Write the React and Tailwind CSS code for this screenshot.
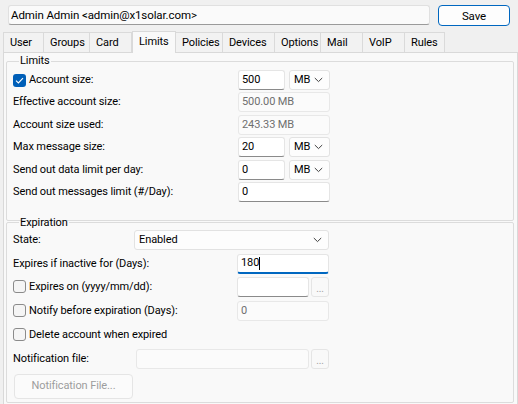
import React from 'react';

const tabs = [
    { name: 'User', w: 41 },
    { name: 'Groups', w: 46 },
    { name: 'Card', w: 42 },
    { name: 'Limits', w: 44, active: true },
    { name: 'Policies', w: 47 },
    { name: 'Devices', w: 52 },
    { name: 'Options', w: 46 },
    { name: 'Mail', w: 42 },
    { name: 'VoIP', w: 42 },
    { name: 'Rules', w: 40 },
];

function Chevron() {
    return (
        <svg width="9" height="6" viewBox="0 0 9 6" className="shrink-0">
            <path d="M0.8 1 L4.5 4.6 L8.2 1" fill="none" stroke="#404040" strokeWidth="1" />
        </svg>
    );
}

function Check({ checked }) {
    if (checked) {
        return (
            <span className="w-[13px] h-[13px] rounded-[3px] bg-[#005fb8] flex items-center justify-center shrink-0">
                <svg width="9" height="7" viewBox="0 0 9 7">
                    <path d="M1 3.6 L3.4 5.9 L8 1.2" fill="none" stroke="#fff" strokeWidth="1.1" />
                </svg>
            </span>
        );
    }
    return <span className="w-[13px] h-[13px] rounded-[3px] border border-[#8b8b8b] bg-[#f5f5f5] shrink-0" />;
}

function Input({ w, value, disabled, focused }) {
    let cls = 'h-[20px] rounded-[3px] border px-[3px] flex items-center shrink-0 ';
    if (disabled) cls += 'bg-[#fbfbfb] border-[#e8e8e8] text-[#6f6f6f]';
    else if (focused) cls += 'bg-white border-[#e5e5e5] border-b-2 border-b-[#0067c0] text-black';
    else cls += 'bg-white border-[#e5e5e5] border-b-[#8a8a8a] text-black';
    return (
        <div className={cls} style={{ width: w }}>
            <span>{value}</span>
            {focused && <span className="w-px h-[13px] bg-black" />}
        </div>
    );
}

function Select({ w, value }) {
    return (
        <div
            className="h-[20px] rounded-[3px] border border-[#e2e2e2] bg-[#fdfdfd] pl-[4px] pr-[6px] flex items-center justify-between shrink-0"
            style={{ width: w }}
        >
            <span>{value}</span>
            <Chevron />
        </div>
    );
}

function Dots() {
    return (
        <div className="ml-[2px] w-[18px] h-[20px] rounded-[3px] border border-[#e5e5e5] bg-[#f9f9f9] flex items-end justify-center pb-[2px] text-[#a0a0a0] text-[10px] leading-none">
            ...
        </div>
    );
}

function Row({ children, className = '' }) {
    return <div className={'h-[20px] flex items-center ' + className}>{children}</div>;
}

function Label({ w, children }) {
    return <div className="shrink-0" style={{ width: w }}>{children}</div>;
}

function CheckLabel({ w, checked, children }) {
    return (
        <div className="shrink-0 flex items-center gap-[3px]" style={{ width: w }}>
            <Check checked={checked} />
            <span>{children}</span>
        </div>
    );
}

export default function App() {
    return (
        <div className="w-[518px] h-[404px] bg-[#f0f0f0] overflow-hidden text-[11px] tracking-[-0.1px] text-black font-['Segoe_UI','Roboto',sans-serif] leading-[14px]">
            <div className="flex pt-[5px] pl-[8px]">
                <div className="w-[422px] h-[20px] bg-[#fafafa] border border-[#e0e0e0] border-b-[#9a9a9a] rounded-[3px] px-[2px] flex items-center text-[11.5px]">
                    Admin Admin &lt;admin@x1solar.com&gt;
                </div>
                <button className="ml-[8px] w-[72px] h-[21px] bg-[#fdfdfd] border border-[#0067c0] rounded-[4px] flex items-center justify-center text-[11.5px]">
                    Save
                </button>
            </div>

            <div className="flex items-end pl-[3px] mt-[5px] h-[21px] text-[11px]">
                {tabs.map(t => (
                    <div
                        key={t.name}
                        className={
                            t.active
                                ? 'h-[22px] -mb-px relative z-10 bg-[#f9f9f9] border border-b-0 border-[#d9d9d9] pl-[6px] pt-[3px] shrink-0'
                                : 'h-[20px] bg-[#f2f2f2] border border-b-0 border-l-0 first:border-l border-[#dadada] pl-[6px] pt-[3px] shrink-0'
                        }
                        style={{ width: t.w }}
                    >
                        {t.name}
                    </div>
                ))}
            </div>

            <div className="ml-[3px] w-[515px] h-[360px] bg-[#f9f9f9] border border-[#d9d9d9] px-[2px] pt-[1px]">
                <fieldset className="border border-[#dcdcdc] w-[508px] pl-[6px] pb-[18px] rounded-[2px]">
                    <legend className="ml-[6px] px-px">Limits</legend>
                    <div className="flex flex-col gap-[2.4px] pt-[2px]">
                        <Row>
                            <CheckLabel w={225} checked>Account size:</CheckLabel>
                            <Input w={47} value="500" />
                            <div className="ml-[4px]"><Select w={41} value="MB" /></div>
                        </Row>
                        <Row>
                            <Label w={225}>Effective account size:</Label>
                            <Input w={92} value="500.00 MB" disabled />
                        </Row>
                        <Row>
                            <Label w={225}>Account size used:</Label>
                            <Input w={92} value="243.33 MB" disabled />
                        </Row>
                        <Row>
                            <Label w={225}>Max message size:</Label>
                            <Input w={47} value="20" />
                            <div className="ml-[4px]"><Select w={41} value="MB" /></div>
                        </Row>
                        <Row>
                            <Label w={225}>Send out data limit per day:</Label>
                            <Input w={47} value="0" />
                            <div className="ml-[4px]"><Select w={41} value="MB" /></div>
                        </Row>
                        <Row>
                            <Label w={225}>Send out messages limit (#/Day):</Label>
                            <Input w={92} value="0" />
                        </Row>
                    </div>
                </fieldset>

                <fieldset className="-mt-[5px] border border-[#dcdcdc] w-[508px] pl-[6px] pb-[3px] rounded-[2px]">
                    <legend className="ml-[6px] px-px">Expiration</legend>
                    <div className="flex flex-col gap-[3px]">
                        <Row className="mb-[1px]">
                            <Label w={121}>State:</Label>
                            <Select w={195} value="Enabled" />
                        </Row>
                        <Row>
                            <Label w={224}>Expires if inactive for (Days):</Label>
                            <Input w={92} value="180" focused />
                        </Row>
                        <Row>
                            <CheckLabel w={224}>Expires on (yyyy/mm/dd):</CheckLabel>
                            <Input w={72} value="" />
                            <Dots />
                        </Row>
                        <Row className="mt-[1px]">
                            <CheckLabel w={224}>Notify before expiration (Days):</CheckLabel>
                            <Input w={92} value="0" disabled />
                        </Row>
                        <Row className="mt-[1px]">
                            <CheckLabel w={224}>Delete account when expired</CheckLabel>
                        </Row>
                        <Row className="mt-[1px]">
                            <Label w={123}>Notification file:</Label>
                            <Input w={173} value="" disabled />
                            <Dots />
                        </Row>
                        <div className="pt-[2px]">
                            <button className="w-[119px] h-[25px] ml-px bg-[#fbfbfb] border border-[#e5e5e5] rounded-[4px] text-[#9d9d9d]">
                                Notification File...
                            </button>
                        </div>
                    </div>
                </fieldset>
            </div>
        </div>
    );
}
